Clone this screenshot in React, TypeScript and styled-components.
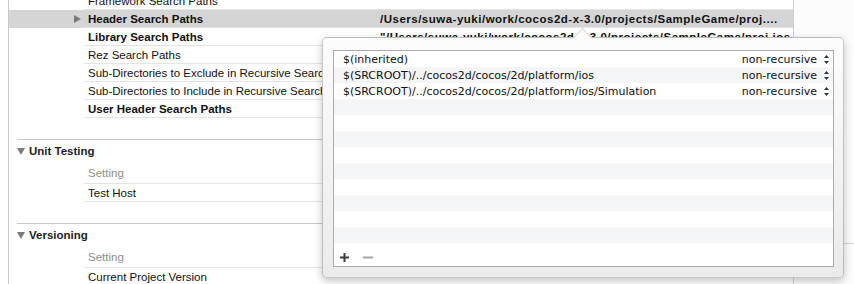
// Build settings list with a search path popover
import { FC } from 'react'
import styled, { createGlobalStyle } from 'styled-components'

const GlobalStyle = createGlobalStyle`
	html, body {
		margin: 0;
		padding: 0;
		background: #fff;
	}
	body {
		font-family: 'Liberation Sans', Arial, sans-serif;
		font-size: 11.5px;
		color: #111;
	}
`

const Page = styled.div`
	position: relative;
	display: flex;
	width: 854px;
	height: 284px;
	overflow: hidden;
	background: #fff;
`

const Gutter = styled.div`
	width: 8px;
	flex: none;
	border-right: 1px solid #c9c9c9;
`

const Table = styled.div`
	width: 784px;
	flex: none;
	display: flex;
	flex-direction: column;
	margin-top: -8px;
`

const RightPane = styled.div`
	flex: 1;
	border-left: 1px solid #cfcfcf;
	display: flex;
	flex-direction: column;
	background: #fcfcfc;
	.top {
		height: 243px;
		border-bottom: 1px solid #d6d6d6;
	}
`

const Row = styled.div<{ $active?: boolean; $height?: number }>`
	display: flex;
	height: ${(p) => p.$height || 18}px;
	flex: none;
	background: ${(p) => (p.$active ? '#d5d5d5' : 'transparent')};
	.disclosure {
		width: 75px;
		display: flex;
		align-items: center;
		justify-content: flex-end;
		padding-right: 3px;
		box-sizing: border-box;
	}
	.cells {
		flex: 1;
		display: flex;
		align-items: center;
		border-bottom: 1px solid #e4e4e4;
		min-width: 0;
	}
`

const Name = styled.div<{ $bold?: boolean; $muted?: boolean }>`
	width: 292px;
	flex: none;
	padding-left: 4px;
	white-space: nowrap;
	overflow: hidden;
	font-weight: ${(p) => (p.$bold ? 'bold' : 'normal')};
	color: ${(p) => (p.$muted ? '#8e8e8e' : '#111')};
`

const Value = styled.div<{ $bold?: boolean }>`
	flex: 1;
	min-width: 0;
	padding-right: 7px;
	white-space: nowrap;
	overflow: hidden;
	letter-spacing: 0.5px;
	font-weight: ${(p) => (p.$bold ? 'bold' : 'normal')};
`

const Spacer = styled.div`
	height: 21px;
	flex: none;
`

const SectionHeader = styled.div`
	height: 23px;
	flex: none;
	margin-left: 8px;
	border-top: 1px solid #c8c8c8;
	display: flex;
	align-items: center;
	gap: 4px;
	font-weight: bold;
	color: #222;
	box-sizing: border-box;
`

const Popover = styled.div`
	position: absolute;
	left: 322px;
	top: 37px;
	width: 522px;
	height: 241px;
	box-sizing: border-box;
	padding: 12px 9px 10px 10px;
	border: 1px solid rgba(0, 0, 0, 0.2);
	border-radius: 5px;
	background: linear-gradient(#fcfcfc, #ebebeb);
	box-shadow: 0 3px 8px rgba(0, 0, 0, 0.24);
	display: flex;
`

const Arrow = styled.div`
	position: absolute;
	left: 252px;
	top: -7px;
	width: 14px;
	height: 14px;
	background: #fcfcfc;
	border-left: 1px solid rgba(0, 0, 0, 0.16);
	border-top: 1px solid rgba(0, 0, 0, 0.16);
	transform: rotate(45deg);
`

const List = styled.div`
	position: relative;
	flex: 1;
	display: flex;
	flex-direction: column;
	border: 1px solid #ababab;
	background: #fff;
	font-family: 'DejaVu Sans', Verdana, sans-serif;
	font-size: 11px;
	color: #111;
`

const PathRow = styled.div<{ $odd: boolean }>`
	height: 16px;
	flex: none;
	display: flex;
	align-items: center;
	padding: 0 4px 0 9px;
	background: ${(p) => (p.$odd ? '#f3f5f7' : '#fff')};
	.path {
		flex: 1;
		white-space: nowrap;
	}
	.mode {
		display: flex;
		align-items: center;
		gap: 7px;
	}
`

const Footer = styled.div`
	flex: 1;
	display: flex;
	align-items: center;
	gap: 14px;
	padding: 6px 0 0 6px;
`

const Triangle: FC<{ dir: 'right' | 'down' }> = ({ dir }) => (
	<svg width="8" height="8" viewBox="0 0 8 8">
		{dir === 'right' ? (
			<polygon points="1,0 8,4 1,8" fill="#7b7b7b" />
		) : (
			<polygon points="0,1 8,1 4,8" fill="#7b7b7b" />
		)}
	</svg>
)

const Stepper = () => (
	<svg width="5" height="9" viewBox="0 0 5 9">
		<polygon points="2.5,0 5,3 0,3" fill="#333" />
		<polygon points="0,6 5,6 2.5,9" fill="#333" />
	</svg>
)

const PlusIcon = () => (
	<svg width="9" height="9" viewBox="0 0 9 9">
		<rect x="3.5" y="0" width="2" height="9" fill="#3c3c3c" />
		<rect x="0" y="3.5" width="9" height="2" fill="#3c3c3c" />
	</svg>
)

const MinusIcon = () => (
	<svg width="10" height="9" viewBox="0 0 10 9">
		<rect x="0" y="3.5" width="10" height="2" fill="#a5a5a5" />
	</svg>
)

const settings = [
	{ name: 'Framework Search Paths', value: '' },
	{
		name: 'Header Search Paths',
		value: '/Users/suwa-yuki/work/cocos2d-x-3.0/projects/SampleGame/proj....',
		bold: true,
		active: true
	},
	{
		name: 'Library Search Paths',
		value: '"/Users/suwa-yuki/work/cocos2d-x-3.0/projects/SampleGame/proj.ios_mac"',
		bold: true
	},
	{ name: 'Rez Search Paths', value: '' },
	{ name: 'Sub-Directories to Exclude in Recursive Searches', value: '' },
	{ name: 'Sub-Directories to Include in Recursive Searches', value: '' },
	{ name: 'User Header Search Paths', value: '', bold: true }
]

const paths = [
	'$(inherited)',
	'$(SRCROOT)/../cocos2d/cocos/2d/platform/ios',
	'$(SRCROOT)/../cocos2d/cocos/2d/platform/ios/Simulation'
]

const Section: FC<{ title: string; item: string }> = ({ title, item }) => (
	<>
		<SectionHeader>
			<Triangle dir="down" />
			<span>{title}</span>
		</SectionHeader>
		<Row $height={22}>
			<div className="disclosure" />
			<div className="cells">
				<Name $muted>Setting</Name>
			</div>
		</Row>
		<Row>
			<div className="disclosure" />
			<div className="cells">
				<Name>{item}</Name>
			</div>
		</Row>
	</>
)

export const App: FC = () => {
	const rows = Array.from({ length: 12 }, (_, i) => paths[i] || null)
	return (
		<>
			<GlobalStyle />
			<Page>
				<Gutter />
				<Table>
					{settings.map((s) => (
						<Row key={s.name} $active={s.active}>
							<div className="disclosure">{s.active && <Triangle dir="right" />}</div>
							<div className="cells">
								<Name $bold={s.bold}>{s.name}</Name>
								<Value $bold={s.bold}>{s.value}</Value>
							</div>
						</Row>
					))}
					<Spacer />
					<Section title="Unit Testing" item="Test Host" />
					<Spacer />
					<Section title="Versioning" item="Current Project Version" />
				</Table>
				<RightPane>
					<div className="top" />
				</RightPane>

				<Popover>
					<Arrow />
					<List>
						{rows.map((p, i) => (
							<PathRow key={i} $odd={i % 2 === 1}>
								<span className="path">{p}</span>
								{p && (
									<span className="mode">
										non-recursive
										<Stepper />
									</span>
								)}
							</PathRow>
						))}
						<Footer>
							<PlusIcon />
							<MinusIcon />
						</Footer>
					</List>
				</Popover>
			</Page>
		</>
	)
}

export default App
